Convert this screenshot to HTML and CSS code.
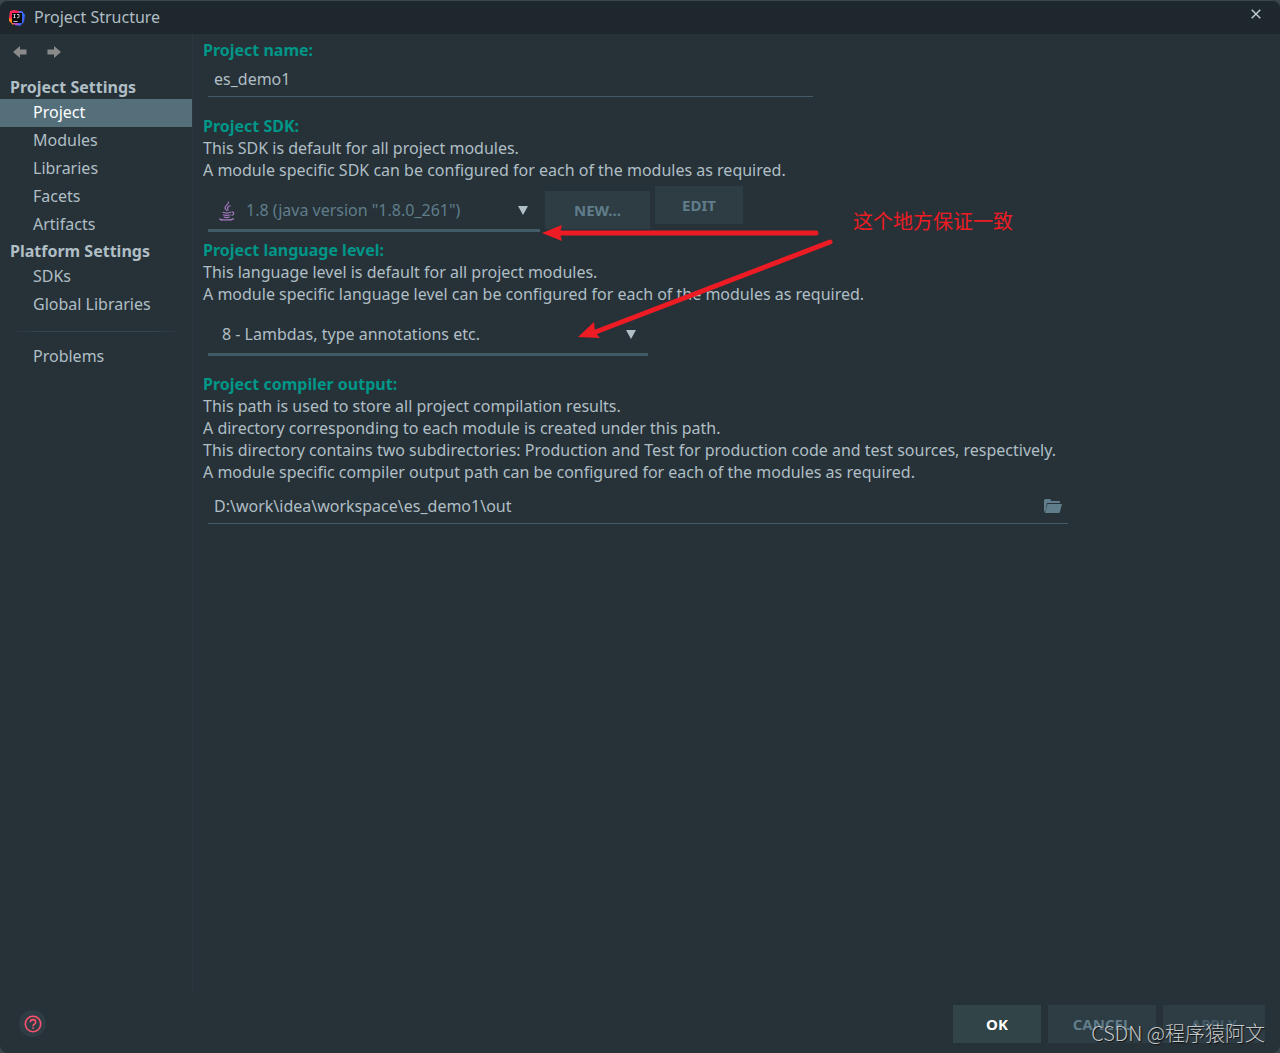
FILE: index.html
```html
<!DOCTYPE html>
<html lang="en">

<head>
    <meta charset="UTF-8">
    <meta name="viewport" content="width=device-width, initial-scale=1.0">
    <title>Project Structure</title>
    <link rel="stylesheet" href="styles.css">
</head>

<body>
    <div class="window">
        <header class="title-bar">
            <svg class="app-icon" width="16" height="16" viewBox="0 0 16 16">
                <defs>
                    <linearGradient id="logo-right" x1="0" y1="0" x2="1" y2="1">
                        <stop offset="0" stop-color="#b04ae0" />
                        <stop offset="0.5" stop-color="#2c6cf5" />
                        <stop offset="1" stop-color="#5a55e8" />
                    </linearGradient>
                </defs>
                <path d="M9 1l4 0 3 4-1 7-4 4-5-1 2-8z" fill="url(#logo-right)" />
                <path d="M0 8l4-1 2 6-2 2-4-4z" fill="#fc801d" />
                <path d="M1 1l4-1 5 1-2 5-5 3-3-1z" fill="#fe2857" />
                <path d="M3 12l4-1 3 4-4 0z" fill="#c248c8" />
                <rect x="3" y="3" width="10" height="10" fill="#0b0b0d" />
                <path d="M4.500 4.500h2M5.500 4.500v3M4.500 7.500h2M8 4.500h2v2.500q0 .7-.7.7h-1.300M4.500 11.500h4" stroke="#d8d8d8" stroke-width=".9" fill="none" />
            </svg>
            <h1 class="title">Project Structure</h1>
            <button class="close-btn" aria-label="Close">
                <svg width="10" height="10" viewBox="0 0 10 10">
                    <path d="M.7.7l8.600 8.600M9.300.7L.7 9.300" stroke="#c3ced3" stroke-width="1.400" />
                </svg>
            </button>
        </header>

        <div class="body">
            <nav class="sidebar">
                <div class="history">
                    <button class="history-btn" aria-label="Back">
                        <svg width="14" height="12" viewBox="0 0 14 12">
                            <path d="M0 6l7-6v3.500h6.500v5H7V12z" fill="#8a8a8a" />
                        </svg>
                    </button>
                    <button class="history-btn" aria-label="Forward">
                        <svg width="14" height="12" viewBox="0 0 14 12">
                            <path d="M14 6L7 0v3.500H.5v5H7V12z" fill="#8a8a8a" />
                        </svg>
                    </button>
                </div>
                <h2 class="nav-heading">Project Settings</h2>
                <a href="#" class="nav-item active">Project</a>
                <a href="#" class="nav-item">Modules</a>
                <a href="#" class="nav-item">Libraries</a>
                <a href="#" class="nav-item">Facets</a>
                <a href="#" class="nav-item">Artifacts</a>
                <h2 class="nav-heading">Platform Settings</h2>
                <a href="#" class="nav-item">SDKs</a>
                <a href="#" class="nav-item">Global Libraries</a>
                <hr class="nav-line">
                <a href="#" class="nav-item">Problems</a>
            </nav>

            <main class="content">
                <section class="group">
                    <label class="label" for="project-name">Project name:</label>
                    <div class="field name-field">
                        <input type="text" id="project-name" value="es_demo1">
                    </div>
                </section>

                <section class="group sdk-group">
                    <label class="label" for="project-sdk">Project SDK:</label>
                    <p>This SDK is default for all project modules.</p>
                    <p>A module specific SDK can be configured for each of the modules as required.</p>
                    <div class="sdk-row">
                        <div class="select-box sdk-select">
                            <svg class="java-icon" width="16" height="20" viewBox="0 0 16 20" fill="none" stroke="#a678c0" stroke-width="1.200">
                                <path d="M9.500 0.500c1 3-4 4-3.500 6.500 0 1 1.200 1.800 1.700 2.800M11.500 4.500c-2 .8-3.200 1.600-3 2.600.2 1 1 1.400.3 2.700" />
                                <path d="M3.500 11.300c2 .8 6 .8 8.500 0M4 13.700c2 .8 5 .8 7.500 0M4.700 16c2 .7 4 .7 6 0M12.500 11c3-.5 3 2.500 0 3.500M.5 17.500c0 1.700 12 2 14.500 0M1 18.800h12" />
                            </svg>
                            <select id="project-sdk">
                                <option>1.8 (java version "1.8.0_261")</option>
                            </select>
                            <svg class="drop-icon" width="10" height="9" viewBox="0 0 10 9">
                                <path d="M0 0h10L5 9z" fill="#b0bec5" />
                            </svg>
                        </div>
                        <button class="btn new-btn">NEW...</button>
                        <button class="btn">EDIT</button>
                    </div>
                </section>

                <section class="group level-group">
                    <label class="label" for="language-level">Project language level:</label>
                    <p>This language level is default for all project modules.</p>
                    <p>A module specific language level can be configured for each of the modules as required.</p>
                    <div class="select-box level-select">
                        <select id="language-level">
                            <option>8 - Lambdas, type annotations etc.</option>
                        </select>
                        <svg class="drop-icon" width="10" height="9" viewBox="0 0 10 9">
                            <path d="M0 0h10L5 9z" fill="#b0bec5" />
                        </svg>
                    </div>
                </section>

                <section class="group">
                    <label class="label" for="output-path">Project compiler output:</label>
                    <p>This path is used to store all project compilation results.</p>
                    <p>A directory corresponding to each module is created under this path.</p>
                    <p>This directory contains two subdirectories: Production and Test for production code and test sources, respectively.</p>
                    <p>A module specific compiler output path can be configured for each of the modules as required.</p>
                    <div class="field output-field">
                        <input type="text" id="output-path" value="D:\work\idea\workspace\es_demo1\out">
                        <button class="browse-btn" aria-label="Browse">
                            <svg width="18" height="14" viewBox="0 0 18 14">
                                <path d="M0 13V1.500Q0 0 1.500 0H6l1.500 2H15q1 0 1 1v1H3L1.500 12z" fill="#607d8b" />
                                <path d="M3.500 5H18l-2 7.500q-.3 1.500-1.500 1.500H1z" fill="#607d8b" />
                            </svg>
                        </button>
                    </div>
                </section>

                <!-- annotation arrows -->
                <svg class="arrows" width="300" height="130" viewBox="0 0 300 130">
                    <g stroke="#ed1c24" stroke-width="5" stroke-linecap="round">
                        <path d="M18 13H275" />
                        <path d="M52 113L289 22" />
                    </g>
                    <g fill="#ed1c24">
                        <path d="M1 13L21 5L19 13L21 21z" />
                        <path d="M37 117L53 102L54 112L59 118z" />
                    </g>
                </svg>
                <span class="note" lang="zh-CN">这个地方保证一致</span>
            </main>
        </div>

        <footer class="footer">
            <button class="help-btn" aria-label="Help">
                <svg width="18" height="18" viewBox="0 0 18 18" fill="none" stroke="#ff5370" stroke-width="1.600">
                    <circle cx="9" cy="9" r="7.700" />
                    <path d="M6.300 7.200c0-3.500 5.400-3.500 5.400 0 0 1.800-2.700 1.900-2.700 4M9 12.200v1.600" />
                </svg>
            </button>
            <button class="btn ok-btn">OK</button>
            <button class="btn cancel-btn">CANCEL</button>
            <button class="btn apply-btn" disabled>APPLY</button>
        </footer>
        <div class="watermark" lang="zh-CN">CSDN @程序猿阿文</div>
    </div>
</body>

</html>
```
FILE: styles.css
```css
* {
    box-sizing: border-box;
}

body {
    margin: 0;
    background-color: #3b464b;
    font-family: "Noto Sans", "Noto Sans CJK SC", sans-serif;
    font-size: 16px;
    line-height: 22px;
    color: #b0bec5;
}

h1,
h2,
p {
    margin: 0;
}

button,
input,
select {
    margin: 0;
    padding: 0;
    border: none;
    border-radius: 0;
    background: none;
    font: inherit;
    color: inherit;
    outline: none;
}

svg {
    display: block;
    flex-shrink: 0;
}

.window {
    position: relative;
    display: flex;
    flex-direction: column;
    min-height: 100vh;
    background-color: #263238;
    border-top: 1px solid #3b464b;
    border-radius: 8px;
    overflow: hidden;
}

/* title bar */
.title-bar {
    display: flex;
    align-items: center;
    height: 33px;
    padding: 0 16px 0 9px;
    background-color: #1e272c;
}

.title {
    flex: 1;
    margin-left: 9px;
    padding-bottom: 2px;
    font-size: 16px;
    font-weight: normal;
}

.close-btn {
    display: flex;
    align-items: center;
    justify-content: center;
    width: 16px;
    height: 26px;
    align-self: flex-start;
}

.body {
    display: flex;
    flex: 1;
}

/* sidebar */
.sidebar {
    width: 193px;
    flex-shrink: 0;
    border-right: 1px solid #2a373e;
}

.history {
    display: flex;
    gap: 20px;
    height: 41px;
    padding: 12px 13px;
}

.history-btn {
    width: 14px;
    height: 12px;
}

.nav-heading {
    padding-left: 10px;
    font-size: 16px;
    font-weight: bold;
    line-height: 24px;
}

.nav-item {
    display: block;
    padding: 0 0 2px 33px;
    line-height: 26px;
    color: #b0bec5;
    text-decoration: none;
}

.nav-item.active {
    background-color: #546e7a;
    color: #fff;
}

.nav-line {
    height: 1px;
    margin: 12px 8px 11px;
    border: none;
    background: linear-gradient(to right, transparent, #37474f 20%, #37474f 80%, transparent);
}

/* content */
.content {
    position: relative;
    flex: 1;
    padding: 5px 10px;
}

.group {
    margin-bottom: 18px;
}

.sdk-group {
    margin-bottom: 7px;
}

.level-group {
    margin-bottom: 17px;
}

.label {
    display: block;
    font-weight: bold;
    color: #009688;
}

.field {
    display: flex;
    align-items: center;
    height: 36px;
    margin-left: 5px;
    padding: 0 6px;
    border-bottom: 1px solid #425b67;
}

.field input {
    flex: 1;
    min-width: 0;
}

.name-field {
    max-width: 605px;
}

.output-field {
    max-width: 860px;
    margin-top: 5px;
}

.select-box {
    position: relative;
    margin-left: 5px;
    border-bottom: 3px solid #425b67;
}

.select-box select {
    display: block;
    width: 100%;
    height: 40px;
    padding: 2px 0 0 14px;
    appearance: none;
}

.select-box option {
    background-color: #263238;
}

.drop-icon {
    position: absolute;
    right: 12px;
    top: 17px;
    pointer-events: none;
}

.level-select {
    max-width: 440px;
    margin-top: 8px;
}

.sdk-row {
    display: flex;
    align-items: flex-start;
    gap: 5px;
    padding-top: 5px;
}

.sdk-select {
    width: 332px;
    margin-top: 3px;
    color: #607d8b;
}

.sdk-select select {
    padding-left: 38px;
}

.java-icon {
    position: absolute;
    left: 11px;
    top: 12px;
}

.btn {
    width: 88px;
    height: 38px;
    background-color: #2e3c43;
    font-size: 15px;
    font-weight: bold;
    color: #607d8b;
}

.new-btn {
    width: 105px;
    margin-top: 5px;
}

.browse-btn {
    width: 18px;
}

/* annotation */
.arrows {
    position: absolute;
    left: 348px;
    top: 186px;
    pointer-events: none;
}

.note {
    position: absolute;
    left: 660px;
    top: 176px;
    font-family: "Noto Sans CJK SC", sans-serif;
    font-size: 20px;
    color: #ed1c24;
}

/* footer */
.footer {
    display: flex;
    align-items: center;
    gap: 7px;
    height: 59px;
    padding: 0 15px 0 19px;
}

.help-btn {
    display: flex;
    align-items: center;
    justify-content: center;
    width: 27px;
    height: 27px;
    margin-right: auto;
    border-radius: 50%;
    background-color: #2e3c43;
}

.ok-btn {
    background-color: #314549;
    color: #fff;
}

.cancel-btn {
    width: 108px;
}

.apply-btn {
    width: 102px;
    color: #415967;
}

.watermark {
    position: absolute;
    right: 15px;
    bottom: 9px;
    font-family: "Noto Sans CJK SC", sans-serif;
    font-size: 20px;
    font-weight: 300;
    color: #c3c7c9;
    text-shadow: 1px 1px 1px #111;
}
```
